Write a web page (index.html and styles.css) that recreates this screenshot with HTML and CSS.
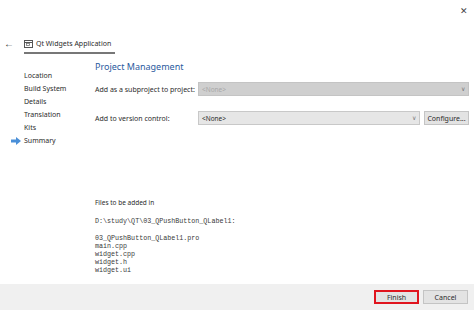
FILE: index.html
```html
<!DOCTYPE html>
<html lang="en">
<head>
  <meta charset="UTF-8" />
  <title>Qt Widgets Application</title>
  <link rel="stylesheet" href="styles.css">
</head>
<body>
  <div class="window">
    <div class="titlebar">
      <span class="close">&#x2715;</span>
    </div>

    <div class="header">
      <span class="back">&#x2190;</span>
      <div class="tab">
        <svg class="tab-icon" width="9" height="8" viewBox="0 0 9 8">
          <rect x="0.5" y="0.5" width="8" height="7" fill="none" stroke="#555" />
          <line x1="0.5" y1="2.5" x2="8.5" y2="2.5" stroke="#555" />
          <rect x="2.5" y="3.5" width="3" height="2" fill="none" stroke="#777" stroke-width="0.8" />
        </svg>
        <span>Qt Widgets Application</span>
      </div>
    </div>

    <div class="wizard">
      <ul class="steps">
        <li>Location</li>
        <li>Build System</li>
        <li>Details</li>
        <li>Translation</li>
        <li>Kits</li>
        <li class="current">
          <svg class="step-arrow" width="10" height="8" viewBox="0 0 10 8">
            <path d="M0 2.5 H5 V0 L10 4 L5 8 V5.5 H0 Z" fill="#4a8fd8" />
          </svg>
          Summary
        </li>
      </ul>

      <div class="page">
        <h2>Project Management</h2>

        <div class="form-row first">
          <label>Add as a subproject to project:</label>
          <div class="combo disabled">
            <span>&lt;None&gt;</span>
            <span class="chev">&#x2228;</span>
          </div>
        </div>

        <div class="form-row">
          <label>Add to version control:</label>
          <div class="combo">
            <span>&lt;None&gt;</span>
            <span class="chev">&#x2228;</span>
          </div>
          <button class="btn">Configure...</button>
        </div>

        <div class="files">
          <p class="files-title">Files to be added in</p>
          <pre class="mono">D:\study\QT\03_QPushButton_QLabel1:</pre>
          <pre class="mono list">03_QPushButton_QLabel1.pro
main.cpp
widget.cpp
widget.h
widget.ui</pre>
        </div>
      </div>
    </div>

    <div class="footer">
      <button class="btn finish">Finish</button>
      <button class="btn">Cancel</button>
    </div>
  </div>
</body>
</html>
```

FILE: styles.css
```css
:root {
  --text: #2b2b2b;
  --muted: #8a8a8a;
  --blue: #2a5a9e;
  --footer-bg: #f0f0f0;
  --combo-bg: #e6e6e6;
  --border: #c8c8c8;
}

* {
  margin: 0;
  padding: 0;
  box-sizing: border-box;
}

body {
  font-family: "Noto Sans", "Open Sans", sans-serif;
  font-size: 7px;
  color: var(--text);
  background: #fff;
}

.window {
  width: 474px;
  height: 310px;
  display: flex;
  flex-direction: column;
}

.titlebar {
  height: 20px;
  display: flex;
  justify-content: flex-end;
  align-items: center;
  padding-right: 6px;
}

.close {
  font-size: 9px;
  color: #444;
}

.header {
  height: 33px;
  display: flex;
  align-items: flex-start;
  padding-left: 4px;
}

.back {
  font-size: 10px;
  color: #333;
  width: 20px;
  line-height: 12px;
  padding-top: 17px;
}

.tab {
  display: flex;
  align-items: center;
  gap: 3px;
  padding: 19px 4px 4px 0;
  border-bottom: 2px solid #777;
  font-size: 7px;
  line-height: 9px;
}

.tab-icon {
  flex: none;
}

.wizard {
  flex: 1;
  display: flex;
}

.steps {
  list-style: none;
  width: 95px;
  padding: 16px 0 0 24px;
}

.steps li {
  height: 13px;
  line-height: 13px;
  position: relative;
  white-space: nowrap;
}

.step-arrow {
  position: absolute;
  left: -13px;
  top: 3px;
}

.page {
  flex: 1;
  padding-right: 5px;
}

h2 {
  font-size: 9px;
  font-weight: 400;
  color: var(--blue);
  line-height: 12px;
  margin-top: 8px;
}

.form-row {
  display: flex;
  align-items: center;
  gap: 4px;
  margin-top: 15px;
}

.form-row.first {
  margin-top: 9px;
}

.form-row label {
  width: 99px;
  white-space: nowrap;
}

.combo {
  flex: 1;
  height: 14px;
  border: 1px solid var(--border);
  background: var(--combo-bg);
  display: flex;
  align-items: center;
  justify-content: space-between;
  padding: 0 3px;
  font-size: 6.5px;
}

.combo.disabled {
  background: #cfcfcf;
  color: #a8a8a8;
  border-color: #c4c4c4;
}

.chev {
  font-size: 6px;
  color: #777;
}

.btn {
  font-family: inherit;
  font-size: 7px;
  height: 14px;
  width: 45px;
  border: 1px solid #c4c4c4;
  background: #e3e3e3;
  color: var(--text);
}

.files {
  margin-top: 73px;
}

.files-title {
  font-size: 6.5px;
  line-height: 9px;
}

.mono {
  font-family: "Liberation Mono", monospace;
  font-size: 6.7px;
  line-height: 8px;
  margin-top: 10px;
  color: #3a3a3a;
}

.mono.list {
  margin-top: 9px;
}

.footer {
  height: 26px;
  background: var(--footer-bg);
  display: flex;
  justify-content: flex-end;
  align-items: center;
  gap: 4px;
  padding-right: 6px;
}

.finish {
  border: 2px solid #e0141e;
}
```
